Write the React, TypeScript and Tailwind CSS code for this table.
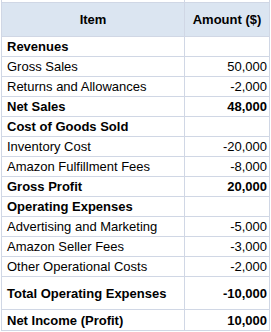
import React from "react";

type Row = { label: string; value?: string; bold?: boolean; tall?: boolean; last?: boolean };

const rows: Row[] = [
  { label: "Revenues", bold: true },
  { label: "Gross Sales", value: "50,000" },
  { label: "Returns and Allowances", value: "-2,000" },
  { label: "Net Sales", value: "48,000", bold: true },
  { label: "Cost of Goods Sold", bold: true },
  { label: "Inventory Cost", value: "-20,000" },
  { label: "Amazon Fulfillment Fees", value: "-8,000" },
  { label: "Gross Profit", value: "20,000", bold: true },
  { label: "Operating Expenses", bold: true },
  { label: "Advertising and Marketing", value: "-5,000" },
  { label: "Amazon Seller Fees", value: "-3,000" },
  { label: "Other Operational Costs", value: "-2,000" },
  { label: "Total Operating Expenses", value: "-10,000", bold: true, tall: true },
  { label: "Net Income (Profit)", value: "10,000", bold: true, last: true },
];

export default function App() {
  return (
    <div
      className="w-[271px] h-[332px] bg-white text-black overflow-hidden"
      style={{ fontFamily: '"Liberation Sans", Arial, sans-serif' }}
    >
      <div className="ml-[1px] w-[269px] grid grid-cols-[182px_84px] gap-px bg-[#d0d7e5] border-x border-b border-[#d0d7e5] text-[13px] leading-none">
        <div className="h-[2px] bg-white" />
        <div className="h-[2px] bg-white" />
        <div className="h-[33px] bg-[#dbe5f1] flex items-center justify-center font-bold">Item</div>
        <div className="h-[33px] bg-[#dbe5f1] flex items-center justify-center font-bold">Amount ($)</div>
        {rows.map((r) => {
          const h = r.tall ? "h-[32px]" : r.last ? "h-[20px]" : "h-[19px]";
          return (
            <React.Fragment key={r.label}>
              <div className={`${h} bg-white flex items-center pl-[5px] ${r.bold ? "font-bold" : ""}`}>
                {r.label}
              </div>
              <div className={`${h} bg-white flex items-center justify-end pr-[2px] ${r.bold ? "font-bold" : ""}`}>
                {r.value ?? ""}
              </div>
            </React.Fragment>
          );
        })}
      </div>
    </div>
  );
}
